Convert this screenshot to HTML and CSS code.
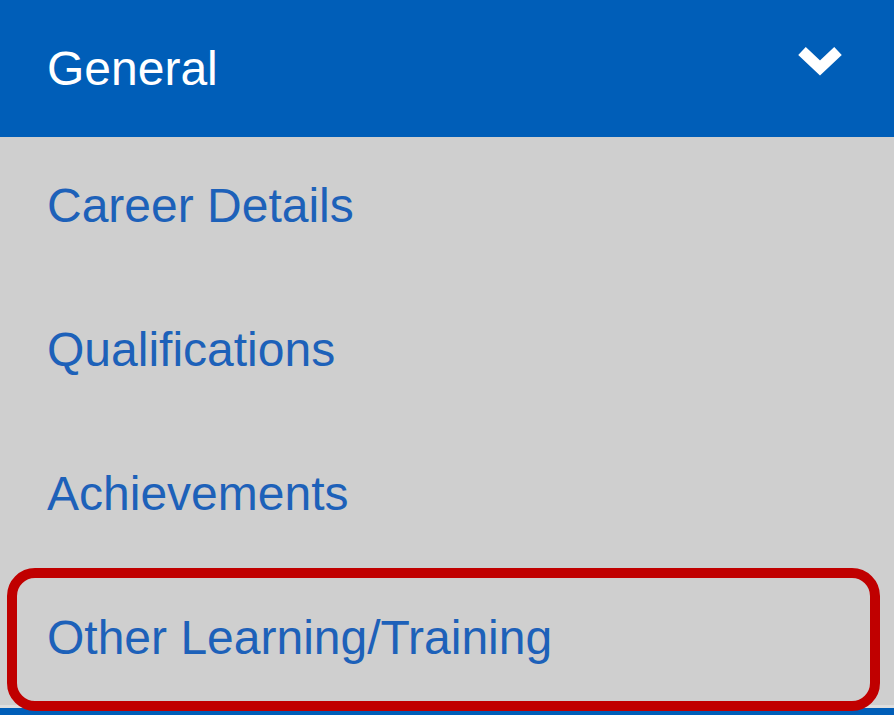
FILE: index.html
```html
<!DOCTYPE html>
<html lang="en">
<head>
  <meta charset="UTF-8">
  <meta name="viewport" content="width=device-width, initial-scale=1.0">
  <title>Profile Menu</title>
  <link rel="stylesheet" href="styles.css">
</head>
<body>
  <div class="menu">
    <div class="menu-head">
      <span class="menu-title">General</span>
      <svg class="chevron" width="46" height="32" viewBox="0 0 46 32">
        <polyline points="5,5 23,22 41,5" fill="none" stroke="#fff" stroke-width="11"/>
      </svg>
    </div>
    <ul class="menu-list">
      <li><a href="#">Career Details</a></li>
      <li><a href="#">Qualifications</a></li>
      <li><a href="#">Achievements</a></li>
      <li class="last"><a href="#">Other Learning/Training</a></li>
    </ul>
    <div class="menu-foot"></div>
    <div class="highlight"></div>
  </div>
</body>
</html>
```

FILE: styles.css
```css
* {
  box-sizing: border-box;
}
body {
  margin: 0;
  background: #cfcfcf;
  font-family: 'Liberation Sans', Arial, sans-serif;
}
.menu {
  position: relative;
  width: 100%;
}
.menu-head {
  height: 137px;
  background: #005eb8;
  display: flex;
  align-items: center;
  justify-content: space-between;
  padding: 0 51px 0 47px;
}
.menu-title {
  color: #fff;
  font-size: 48px;
  line-height: 48px;
}
.chevron {
  display: block;
  margin-top: -13px;
}
.menu-list {
  list-style: none;
  margin: 0;
  padding: 0;
}
.menu-list li {
  height: 144px;
  padding: 0 47px 7px;
  display: flex;
  align-items: center;
}
.menu-list li.last {
  height: 136px;
  padding: 2px 47px 0;
}
.menu-list a {
  color: #1d61b9;
  text-decoration: none;
  font-size: 48px;
  line-height: 48px;
}
.menu-foot {
  height: 10px;
  border-top: 3px solid #dedede;
  background: #005eb8;
}
.highlight {
  position: absolute;
  left: 7px;
  top: 568px;
  width: 873px;
  height: 143px;
  border: 10px solid #c00000;
  border-radius: 28px;
}
```
